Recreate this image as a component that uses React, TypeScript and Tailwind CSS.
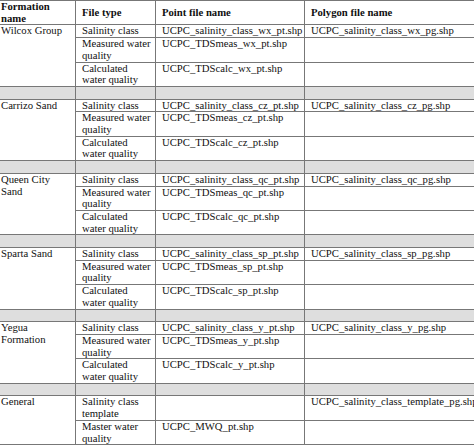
import React from "react";

type Row = { type: string[]; point: string; polygon: string };
type Group = { name: string[]; rows: Row[] };

const groups: Group[] = [
  {
    name: ["Wilcox Group"],
    rows: [
      { type: ["Salinity class"], point: "UCPC_salinity_class_wx_pt.shp", polygon: "UCPC_salinity_class_wx_pg.shp" },
      { type: ["Measured water", "quality"], point: "UCPC_TDSmeas_wx_pt.shp", polygon: "" },
      { type: ["Calculated", "water quality"], point: "UCPC_TDScalc_wx_pt.shp", polygon: "" },
    ],
  },
  {
    name: ["Carrizo Sand"],
    rows: [
      { type: ["Salinity class"], point: "UCPC_salinity_class_cz_pt.shp", polygon: "UCPC_salinity_class_cz_pg.shp" },
      { type: ["Measured water", "quality"], point: "UCPC_TDSmeas_cz_pt.shp", polygon: "" },
      { type: ["Calculated", "water quality"], point: "UCPC_TDScalc_cz_pt.shp", polygon: "" },
    ],
  },
  {
    name: ["Queen City", "Sand"],
    rows: [
      { type: ["Salinity class"], point: "UCPC_salinity_class_qc_pt.shp", polygon: "UCPC_salinity_class_qc_pg.shp" },
      { type: ["Measured water", "quality"], point: "UCPC_TDSmeas_qc_pt.shp", polygon: "" },
      { type: ["Calculated", "water quality"], point: "UCPC_TDScalc_qc_pt.shp", polygon: "" },
    ],
  },
  {
    name: ["Sparta Sand"],
    rows: [
      { type: ["Salinity class"], point: "UCPC_salinity_class_sp_pt.shp", polygon: "UCPC_salinity_class_sp_pg.shp" },
      { type: ["Measured water", "quality"], point: "UCPC_TDSmeas_sp_pt.shp", polygon: "" },
      { type: ["Calculated", "water quality"], point: "UCPC_TDScalc_sp_pt.shp", polygon: "" },
    ],
  },
  {
    name: ["Yegua", "Formation"],
    rows: [
      { type: ["Salinity class"], point: "UCPC_salinity_class_y_pt.shp", polygon: "UCPC_salinity_class_y_pg.shp" },
      { type: ["Measured water", "quality"], point: "UCPC_TDSmeas_y_pt.shp", polygon: "" },
      { type: ["Calculated", "water quality"], point: "UCPC_TDScalc_y_pt.shp", polygon: "" },
    ],
  },
  {
    name: ["General"],
    rows: [
      { type: ["Salinity class", "template"], point: "", polygon: "UCPC_salinity_class_template_pg.shp" },
      { type: ["Master water", "quality"], point: "UCPC_MWQ_pt.shp", polygon: "" },
    ],
  },
];

const cell = "border border-[#777] pl-[6px] pr-0 py-0 align-top whitespace-nowrap";

function Lines({ lines }: { lines: string[] }) {
  return (
    <>
      {lines.map((l, i) => (
        <div key={i}>{l}</div>
      ))}
    </>
  );
}

export default function App() {
  return (
    <div className="w-[474px] h-[448px] overflow-hidden bg-white">
      <table
        className="border-collapse ml-[-6px] table-fixed w-[560px] text-[10.7px] leading-[11.7px] text-[#111]"
        style={{ fontFamily: '"Liberation Serif", "Times New Roman", serif' }}
      >
        <colgroup>
          <col className="w-[81px]" />
          <col className="w-[80px]" />
          <col className="w-[149px]" />
          <col className="w-[250px]" />
        </colgroup>
        <thead>
          <tr className="font-bold">
            <th className={`${cell} w-[81px] text-left align-top`}>
              <div>Formation</div>
              <div>name</div>
            </th>
            <th className={`${cell} w-[80px] text-left !align-middle`}>File type</th>
            <th className={`${cell} w-[149px] text-left !align-middle`}>Point file name</th>
            <th className={`${cell} w-[250px] text-left !align-middle`}>Polygon file name</th>
          </tr>
        </thead>
        <tbody>
          {groups.map((g, gi) => (
            <React.Fragment key={g.name.join(" ")}>
              {gi > 0 && (
                <tr className="bg-[#dedede]">
                  <td className={`${cell} h-[12.7px]`}></td>
                  <td className={cell}></td>
                  <td className={cell}></td>
                  <td className={cell}></td>
                </tr>
              )}
              {g.rows.map((r, ri) => (
                <tr key={ri}>
                  {ri === 0 && (
                    <td className={cell} rowSpan={g.rows.length}>
                      <Lines lines={g.name} />
                    </td>
                  )}
                  <td className={cell}>
                    <Lines lines={r.type} />
                  </td>
                  <td className={cell}>{r.point}</td>
                  <td className={cell}>{r.polygon}</td>
                </tr>
              ))}
            </React.Fragment>
          ))}
        </tbody>
      </table>
    </div>
  );
}
